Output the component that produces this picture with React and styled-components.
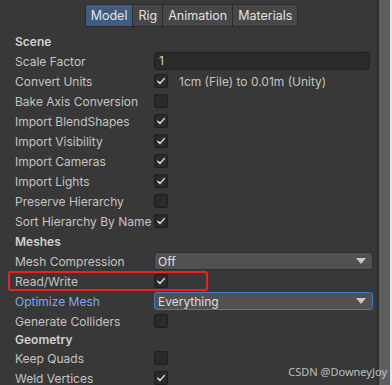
import styled, { createGlobalStyle } from "styled-components";

const GlobalStyle = createGlobalStyle`
    html, body {
        margin: 0;
        padding: 0;
        background: #383838;
    }
    body {
        font-family: Inter, "Noto Sans", sans-serif;
        font-size: 12px;
        color: #c4c4c4;
    }
`

const Window = styled.div`
    display: flex;
    width: 392px;
    height: 385px;
    overflow: hidden;
    position: relative;
`

const Inspector = styled.div`
    flex: 1;
    display: flex;
    flex-direction: column;
`

const Scrollbar = styled.div`
    width: 11px;
    border-left: 2px solid #303030;
    border-right: 2px solid #e4e2ee;
    background: #5d5d5d;
`

const TabBar = styled.div`
    display: flex;
    flex-shrink: 0;
    justify-content: center;
    padding: 4px 0 4px 6px;
`

const Tab = styled.div`
    height: 21px;
    line-height: 21px;
    padding: 0 5px;
    font-size: 12.5px;
    color: #e2e2e2;
    background: ${p => p.$active ? "#3e5d80" : "#474747"};
    border: 1px solid #2b2b2b;
    border-left-width: ${p => p.$first ? "1px" : "0"};
    border-radius: ${p => p.$first ? "3px 0 0 3px" : p.$last ? "0 3px 3px 0" : "0"};
`

const Row = styled.div`
    position: relative;
    display: flex;
    flex-shrink: 0;
    align-items: center;
    height: ${p => p.$height || 20}px;
    padding-left: 15px;
`

const Heading = styled(Row)`
    font-weight: 600;
    color: #d0d0d0;
`

const Label = styled.div`
    width: 139px;
    flex-shrink: 0;
    white-space: nowrap;
    color: ${p => p.$modified ? "#7aa9ee" : "#c4c4c4"};
`

const TextField = styled.div`
    width: 210px;
    height: 16px;
    line-height: 16px;
    padding-left: 4px;
    background: #2a2a2a;
    border: 1px solid #212121;
    border-radius: 3px;
    color: #d2d2d2;
`

const Dropdown = styled.div`
    display: flex;
    align-items: center;
    justify-content: space-between;
    width: 208px;
    height: 16px;
    padding: 0 6px 0 3px;
    background: #515151;
    border: 1px solid ${p => p.$focused ? "#3b7cc4" : "#2f2f2f"};
    border-radius: 3px;
    color: #dedede;
`

const Arrow = styled.span`
    width: 0;
    height: 0;
    border-left: 5px solid transparent;
    border-right: 5px solid transparent;
    border-top: 6px solid #c8c8c8;
`

const Box = styled.div`
    display: flex;
    align-items: center;
    justify-content: center;
    width: 12px;
    height: 12px;
    background: #2a2a2a;
    border: 1px solid #1e1e1e;
    border-radius: 2px;
`

const Note = styled.span`
    margin-left: 11px;
    color: #c4c4c4;
`

const Highlight = styled.div`
    position: absolute;
    left: 8px;
    top: 0;
    width: 196px;
    height: 16px;
    border: 2px solid #f51d1d;
    border-radius: 3px;
    pointer-events: none;
`

const Watermark = styled.div`
    position: absolute;
    right: 5px;
    bottom: 6px;
    font-size: 11px;
    color: rgba(235, 235, 235, 0.75);
    font-family: "Noto Sans", sans-serif;
`

const Checkbox = ({ checked }) => (
    <Box>
        {checked && (
            <svg width="10" height="10" viewBox="0 0 10 10">
                <path d="M1.8 5.3 L4 7.4 L8.3 2.6" fill="none" stroke="#ececec" strokeWidth="1.4" strokeLinecap="round" strokeLinejoin="round" />
            </svg>
        )}
    </Box>
)

const CheckRow = ({ label, checked, note, height }) => (
    <Row $height={height}>
        <Label>{label}</Label>
        <Checkbox checked={checked} />
        {note && <Note>{note}</Note>}
    </Row>
)

const App = () => {
    return (
        <>
            <GlobalStyle />
            <Window>
                <Inspector>
                    <TabBar>
                        <Tab $active $first>Model</Tab>
                        <Tab>Rig</Tab>
                        <Tab>Animation</Tab>
                        <Tab $last>Materials</Tab>
                    </TabBar>

                    <Heading>Scene</Heading>
                    <Row>
                        <Label>Scale Factor</Label>
                        <TextField>1</TextField>
                    </Row>
                    <CheckRow label="Convert Units" checked note="1cm (File) to 0.01m (Unity)" />
                    <CheckRow label="Bake Axis Conversion" />
                    <CheckRow label="Import BlendShapes" checked />
                    <CheckRow label="Import Visibility" checked />
                    <CheckRow label="Import Cameras" checked />
                    <CheckRow label="Import Lights" checked />
                    <CheckRow label="Preserve Hierarchy" />
                    <CheckRow label="Sort Hierarchy By Name" checked />

                    <Heading>Meshes</Heading>
                    <Row>
                        <Label>Mesh Compression</Label>
                        <Dropdown>Off<Arrow /></Dropdown>
                    </Row>
                    <Row>
                        <Label>Read/Write</Label>
                        <Checkbox checked />
                        <Highlight />
                    </Row>
                    <Row>
                        <Label $modified>Optimize Mesh</Label>
                        <Dropdown $focused>Everything<Arrow /></Dropdown>
                    </Row>
                    <CheckRow label="Generate Colliders" />

                    <Heading $height={17}>Geometry</Heading>
                    <CheckRow label="Keep Quads" />
                    <CheckRow label="Weld Vertices" checked />
                </Inspector>
                <Scrollbar />
                <Watermark>CSDN @DowneyJoy</Watermark>
            </Window>
        </>
    )
}

export default App;
